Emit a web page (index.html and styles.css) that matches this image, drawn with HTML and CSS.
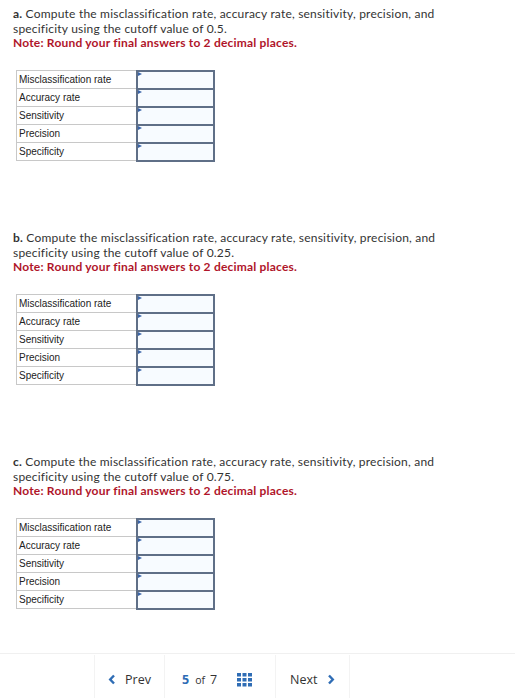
FILE: index.html
```html
<!DOCTYPE html>
<html>
<head>
<meta charset="utf-8">
<link rel="stylesheet" href="styles.css">
</head>
<body>
<div class="page">
  <section class="part">
    <p class="q"><b>a.</b> Compute the misclassification rate, accuracy rate, sensitivity, precision, and<br>specificity using the cutoff value of 0.5.<br><span class="note">Note: Round your final answers to 2 decimal places.</span></p>
    <table class="grid">
      <tr><td class="lbl">Misclassification rate</td><td class="inp"><span class="mark"></span></td></tr>
      <tr><td class="lbl">Accuracy rate</td><td class="inp"><span class="mark"></span></td></tr>
      <tr><td class="lbl">Sensitivity</td><td class="inp"><span class="mark"></span></td></tr>
      <tr><td class="lbl">Precision</td><td class="inp"><span class="mark"></span></td></tr>
      <tr><td class="lbl">Specificity</td><td class="inp"><span class="mark"></span></td></tr>
    </table>
  </section>
  <section class="part">
    <p class="q"><b>b.</b> Compute the misclassification rate, accuracy rate, sensitivity, precision, and<br>specificity using the cutoff value of 0.25.<br><span class="note">Note: Round your final answers to 2 decimal places.</span></p>
    <table class="grid">
      <tr><td class="lbl">Misclassification rate</td><td class="inp"><span class="mark"></span></td></tr>
      <tr><td class="lbl">Accuracy rate</td><td class="inp"><span class="mark"></span></td></tr>
      <tr><td class="lbl">Sensitivity</td><td class="inp"><span class="mark"></span></td></tr>
      <tr><td class="lbl">Precision</td><td class="inp"><span class="mark"></span></td></tr>
      <tr><td class="lbl">Specificity</td><td class="inp"><span class="mark"></span></td></tr>
    </table>
  </section>
  <section class="part">
    <p class="q"><b>c.</b> Compute the misclassification rate, accuracy rate, sensitivity, precision, and<br>specificity using the cutoff value of 0.75.<br><span class="note">Note: Round your final answers to 2 decimal places.</span></p>
    <table class="grid">
      <tr><td class="lbl">Misclassification rate</td><td class="inp"><span class="mark"></span></td></tr>
      <tr><td class="lbl">Accuracy rate</td><td class="inp"><span class="mark"></span></td></tr>
      <tr><td class="lbl">Sensitivity</td><td class="inp"><span class="mark"></span></td></tr>
      <tr><td class="lbl">Precision</td><td class="inp"><span class="mark"></span></td></tr>
      <tr><td class="lbl">Specificity</td><td class="inp"><span class="mark"></span></td></tr>
    </table>
  </section>
</div>
<nav class="pager">
  <div class="btn prev">
    <svg width="8" height="11" viewBox="0 0 8 11"><path d="M6 1.5 L2.2 5.5 L6 9.5" fill="none" stroke="#2f6db5" stroke-width="2.4"/></svg>
    <span>Prev</span>
  </div>
  <div class="btn count">
    <span class="cur">5</span><span class="of">of</span><span class="tot">7</span>
    <svg class="gridicon" width="15" height="14" viewBox="0 0 15 14">
      <rect x="0" y="0" width="4" height="3.5" fill="#2f6db5"/><rect x="5.5" y="0" width="4" height="3.5" fill="#2f6db5"/><rect x="11" y="0" width="4" height="3.5" fill="#2f6db5"/>
      <rect x="0" y="5" width="4" height="3.5" fill="#2f6db5"/><rect x="5.5" y="5" width="4" height="3.5" fill="#2f6db5"/><rect x="11" y="5" width="4" height="3.5" fill="#2f6db5"/>
      <rect x="0" y="10" width="4" height="3.5" fill="#2f6db5"/><rect x="5.5" y="10" width="4" height="3.5" fill="#2f6db5"/><rect x="11" y="10" width="4" height="3.5" fill="#2f6db5"/>
    </svg>
  </div>
  <div class="btn next">
    <span>Next</span>
    <svg width="8" height="11" viewBox="0 0 8 11"><path d="M2 1.5 L5.8 5.5 L2 9.5" fill="none" stroke="#2f6db5" stroke-width="2.4"/></svg>
  </div>
</nav>
</body>
</html>
```

FILE: styles.css
```css
html, body {
  margin: 0;
  padding: 0;
  background: #fff;
}
body {
  font-family: "Open Sans", "Liberation Sans", sans-serif;
  color: #333;
}
.page {
  padding: 7px 13px 0 13px;
}
.part {
  height: 224px;
}
.q {
  margin: 0;
  font-family: Lato, "Open Sans", sans-serif;
  font-size: 12px;
  line-height: 14.5px;
  letter-spacing: 0.2px;
  color: #333;
}
.q b {
  font-weight: 700;
}
.note {
  color: #b0152a;
  font-weight: 700;
}
.grid {
  border-collapse: collapse;
  margin: 19px 0 0 3px;
  font-family: "Liberation Sans", Arial, sans-serif;
  font-size: 10px;
  color: #222;
}
.grid td {
  height: 18px;
  padding: 0;
  box-sizing: border-box;
}
.lbl {
  width: 120px;
  border: 1px solid #c8c8c8;
  padding-left: 2px !important;
}
.inp {
  position: relative;
  width: 77px;
  border: 2px solid #5f6f87;
  background: #f7fbff;
}
.mark {
  position: absolute;
  left: 0;
  top: 0;
  width: 0;
  height: 0;
  border-top: 2.5px solid transparent;
  border-bottom: 2.5px solid transparent;
  border-left: 4px solid #3a64a8;
}
.pager {
  border-top: 1px solid #f0f0f0;
  display: flex;
  padding: 1px 0 0 94px;
  position: absolute;
  top: 653px;
  left: 0;
  right: 0;
}
.btn {
  display: flex;
  align-items: center;
  height: 43px;
  padding-top: 6px;
  border-left: 1px solid #f3f3f3;
  font-family: "Open Sans", "Liberation Sans", sans-serif;
  font-size: 12.5px;
  color: #333;
  box-sizing: border-box;
}
.prev {
  width: 70px;
  padding-left: 13px;
  gap: 9px;
}
.count {
  width: 111px;
  padding-left: 17px;
}
.cur {
  color: #2f6db5;
  font-weight: 700;
}
.of {
  font-size: 10.5px;
  margin: 0 5px 0 6px;
}
.tot {
  margin-right: 20px;
}
.next {
  width: 75px;
  padding-left: 14px;
  gap: 10px;
  border-right: 1px solid #f3f3f3;
}
```
